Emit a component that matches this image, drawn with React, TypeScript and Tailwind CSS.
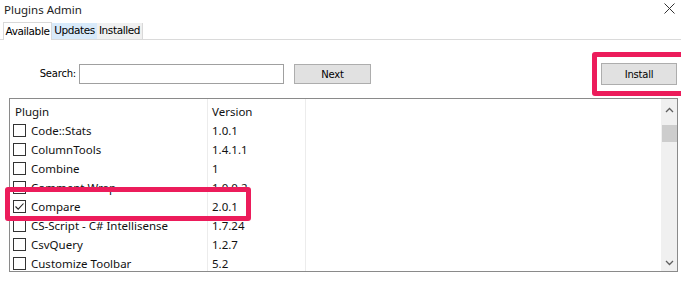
import { useState } from "react";

const plugins = [
  { name: "Code::Stats", version: "1.0.1" },
  { name: "ColumnTools", version: "1.4.1.1" },
  { name: "Combine", version: "1" },
  { name: "Comment Wrap", version: "1.0.0.2" },
  { name: "Compare", version: "2.0.1", checked: true },
  { name: "CS-Script - C# Intellisense", version: "1.7.24" },
  { name: "CsvQuery", version: "1.2.7" },
  { name: "Customize Toolbar", version: "5.2" },
];

const CheckBox = ({ checked }: { checked?: boolean }) => (
  <span className="w-[13px] h-[13px] border border-[#333333] bg-white flex items-center justify-center shrink-0">
    {checked ? (
      <svg width="11" height="11" viewBox="0 0 11 11">
        <path d="M1.5 5.5 L4.2 8.2 L9.5 2.5" fill="none" stroke="#222" strokeWidth="1.1" />
      </svg>
    ) : null}
  </span>
);

const Row = ({ name, version, checked }: { name: string; version: string; checked?: boolean }) => (
  <div className="flex h-[19px] items-center">
    <div className="w-[197px] flex items-center gap-[5px] pl-[3px]">
      <CheckBox checked={checked} />
      <span className="whitespace-nowrap">{name}</span>
    </div>
    <div className="w-[98px] pl-[5px]">{version}</div>
  </div>
);

export default function App() {
  const [search, setSearch] = useState("");

  return (
    <div className="w-[681px] h-[284px] bg-white relative overflow-hidden text-black font-['Noto_Sans',sans-serif]">
      {/* title bar */}
      <div className="h-[21px] flex items-start justify-between pl-[4px] pr-[6px]">
        <span className="text-[11.5px] leading-[14px] mt-[3px] text-[#222]">Plugins Admin</span>
        <svg width="11" height="11" viewBox="0 0 11 11" className="mt-[3px]">
          <path d="M0.5 0.5 L10.5 10.5 M10.5 0.5 L0.5 10.5" stroke="#333" strokeWidth="1" />
        </svg>
      </div>

      {/* tabs */}
      <div className="h-[19px] flex items-end pl-[3px] border-b border-[#dadada] font-['DejaVu_Sans',sans-serif] text-[10.5px] tracking-[-0.4px]">
        <div className="h-[18px] w-[49px] bg-white border border-b-0 border-[#d9d9d9] flex items-center justify-center relative top-[1px]">
          Available
        </div>
        <div className="h-[16px] w-[45px] bg-[#d8eafa] flex items-center justify-center">Updates</div>
        <div className="h-[16px] w-[46px] bg-[#f0f0f0] border-r border-[#d9d9d9] flex items-center justify-center">
          Installed
        </div>
      </div>

      {/* search row */}
      <div className="h-[58px] pt-[24px] flex items-start font-['DejaVu_Sans',sans-serif] text-[10px] tracking-[-0.2px]">
        <span className="w-[76px] text-right leading-[20px]">Search:</span>
        <input
          value={search}
          onChange={(e) => setSearch(e.target.value)}
          className="ml-[3px] w-[205px] h-[20px] border border-[#a0a0a0] outline-none px-1"
        />
        <button className="ml-[10px] w-[77px] h-[20px] bg-[#e1e1e1] border border-[#adadad]">Next</button>
        <button className="ml-[230px] -mt-[1px] w-[76px] h-[22px] bg-[#e1e1e1] border border-[#adadad]">Install</button>
      </div>

      {/* plugin list */}
      <div className="ml-[9px] w-[669px] h-[174px] border border-[#8a8a8a] relative overflow-hidden text-[11.5px] text-[#111] flex">
        <div className="flex-1 pt-[3px] relative">
          <div className="absolute left-[197px] top-0 bottom-0 border-l border-[#ececec]" />
          <div className="absolute left-[295px] top-0 bottom-0 border-l border-[#ececec]" />
          <div className="flex h-[19px] items-center">
            <div className="w-[197px] pl-[5px]">Plugin</div>
            <div className="w-[98px] pl-[5px]">Version</div>
          </div>
          {plugins.map((p) => (
            <Row key={p.name} name={p.name} version={p.version} checked={p.checked} />
          ))}
        </div>
        {/* scrollbar */}
        <div className="w-[16px] bg-[#f0f0f0] flex flex-col items-center">
          <svg width="9" height="6" viewBox="0 0 9 6" className="mt-[8px]">
            <path d="M1 5 L4.5 1.5 L8 5" fill="none" stroke="#606060" strokeWidth="1.3" />
          </svg>
          <div className="mt-[12px] w-[15px] h-[17px] bg-[#cdcdcd]" />
          <div className="flex-1" />
          <svg width="9" height="6" viewBox="0 0 9 6" className="mb-[5px]">
            <path d="M1 1 L4.5 4.5 L8 1" fill="none" stroke="#606060" strokeWidth="1.3" />
          </svg>
        </div>
      </div>

      {/* highlight boxes */}
      <div className="absolute left-[592px] top-[52px] w-[100px] h-[44px] border-[5px] border-[#ec1c5b] rounded-[3px]" />
      <div className="absolute left-[5px] top-[187px] w-[246px] h-[34px] border-[5px] border-[#ec1c5b] rounded-[3px]" />
    </div>
  );
}
